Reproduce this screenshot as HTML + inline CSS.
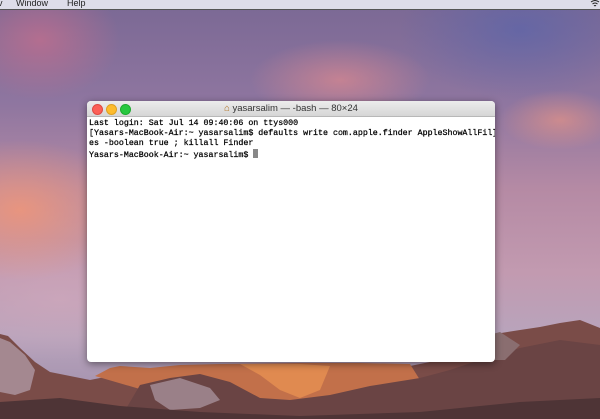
<!DOCTYPE html>
<html><head><meta charset="utf-8"><style>
html,body{margin:0;padding:0;width:600px;height:419px;overflow:hidden}
body{position:relative;font-family:"Liberation Sans",sans-serif;
background:
radial-gradient(ellipse 110px 70px at 20px 210px,rgba(240,150,120,.85),transparent),
radial-gradient(ellipse 90px 40px at 340px 80px,rgba(235,140,140,.6),transparent),
radial-gradient(ellipse 60px 30px at 560px 120px,rgba(240,150,130,.6),transparent),
radial-gradient(ellipse 80px 60px at 40px 40px,rgba(200,110,140,.7),transparent),
radial-gradient(ellipse 120px 70px at 520px 30px,rgba(90,100,170,.7),transparent),
radial-gradient(ellipse 140px 60px at 60px 300px,rgba(210,170,190,.6),transparent),
linear-gradient(180deg,#7a6894 0%,#8f76a0 25%,#b58aa4 45%,#c29ab0 65%,#b8a4bc 80%,#9c8aa8 100%);}
.menu{position:absolute;left:0;top:0;width:600px;height:9px;background:#dedde9;border-bottom:1px solid #555;font-size:9px;line-height:6px;color:#222;overflow:hidden}
.win{position:absolute;left:87px;top:101px;width:408px;height:261px;background:#fff;border-radius:4px;box-shadow:0 2px 8px rgba(0,0,0,.45);overflow:hidden}
.tb{height:15px;background:linear-gradient(#ececec,#d6d6d6);border-bottom:1px solid #b8b8b8;position:relative;font-size:9.5px;color:#333;text-align:center;line-height:15px}
.dot{position:absolute;top:3px;width:9px;height:9px;border-radius:50%}
pre{margin:0;padding:2px 0 0 2px;font-family:"Liberation Mono",monospace;font-size:8.3px;line-height:10px;color:#000;-webkit-text-stroke:0.25px #000}
.cur{display:inline-block;width:5px;height:9px;background:#888;vertical-align:-1px;-webkit-text-stroke:0}
</style></head><body>
<svg style="position:absolute;left:0;top:0" width="600" height="419">
<polygon fill="#7a4c48" points="0,334 8,336 20,348 35,362 50,372 70,376 90,380 110,376 130,372 150,378 170,372 200,380 230,372 260,368 300,366 360,366 400,368 430,362 460,352 495,334 520,330 540,327 560,323 580,320 590,324 600,328 600,419 0,419"/>
<polygon fill="#c2704a" points="95,376 110,368 120,366 150,368 180,365 220,364 300,363 360,363 410,364 420,380 380,392 340,398 300,405 250,400 200,395 150,392"/>
<polygon fill="#e08a50" points="240,364 300,364 330,366 320,390 300,398 280,390 260,375"/>
<polygon fill="#6a4444" points="140,385 170,378 200,374 230,382 260,398 290,400 330,395 370,386 420,378 450,370 480,360 520,348 560,340 600,345 600,419 120,419"/>
<polygon fill="#a48890" points="0,338 10,342 25,355 35,370 30,390 15,395 0,392"/>
<polygon fill="#9a8088" points="150,385 180,378 210,388 220,400 200,408 170,410 155,400"/>
<polygon fill="#8a6e70" points="470,340 500,332 520,345 505,360 480,360"/>
<polygon fill="#4e3436" points="0,402 60,398 120,406 200,412 300,416 420,412 520,402 600,398 600,419 0,419"/>
</svg>
<div class="menu"><span style="position:absolute;left:-2px;top:0">v</span><span style="position:absolute;left:16px;top:0">Window</span><span style="position:absolute;left:67px;top:0">Help</span>
<svg style="position:absolute;left:590px;top:0" width="10" height="9"><path d="M1 2 Q5 -1 9 2 M2.5 4 Q5 2 7.5 4 M4 6 Q5 5 6 6" stroke="#222" fill="none" stroke-width="1"/></svg></div>
<div class="win">
<div class="tb">
<span class="dot" style="left:5px;background:#fc5f57;border:0.5px solid #de4a42"></span>
<span class="dot" style="left:19px;background:#fdbc2e;border:0.5px solid #dea123"></span>
<span class="dot" style="left:33px;background:#28c840;border:0.5px solid #1eab2f"></span>
<span style="color:#b07020">&#8962;</span> yasarsalim — -bash — 80×24</div>
<pre>Last login: Sat Jul 14 09:40:06 on ttys000
[Yasars-MacBook-Air:~ yasarsalim$ defaults write com.apple.finder AppleShowAllFil]
es -boolean true ; killall Finder
Yasars-MacBook-Air:~ yasarsalim$ <span class="cur"></span></pre>
</div>
</body></html>
